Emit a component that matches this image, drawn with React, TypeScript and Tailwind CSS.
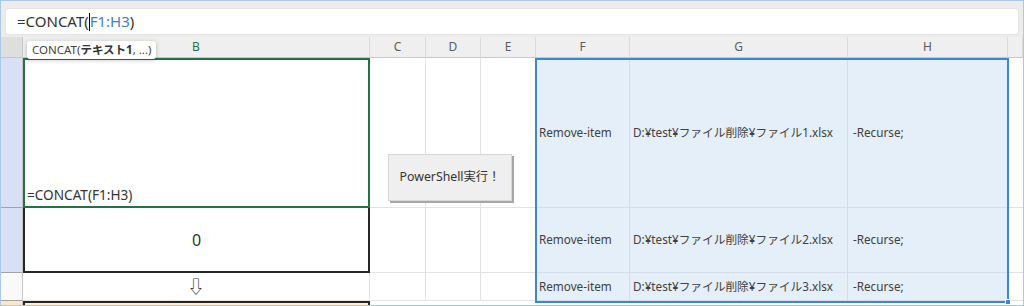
const cols = ['B', 'C', 'D', 'E', 'F', 'G', 'H', ''];

const rows = [
  { h: 'h-[150px]', f: 'Remove-item', g: 'D:¥test¥ファイル削除¥ファイル1.xlsx', r: '-Recurse;' },
  { h: 'h-[65px]', f: 'Remove-item', g: 'D:¥test¥ファイル削除¥ファイル2.xlsx', r: '-Recurse;' },
  { h: 'h-[28px]', f: 'Remove-item', g: 'D:¥test¥ファイル削除¥ファイル3.xlsx', r: '-Recurse;' },
];

function SelCell({ text, last }: { text: string; last?: boolean }) {
  return (
    <div
      className={`flex items-center bg-[#e5eff9] border-b border-[#d3dde8] text-[11.7px] text-[#404040] whitespace-nowrap overflow-hidden ${
        last ? 'pl-[5px]' : 'pl-[3px] border-r'
      }`}
    >
      {text}
    </div>
  );
}

export default function App() {
  return (
    <div className="relative w-[1024px] h-[306px] overflow-hidden border border-[#a9c8ea] bg-white font-['Noto_Sans','Noto_Sans_CJK_JP',sans-serif]">
      {/* formula bar */}
      <div className="h-[36px] bg-[#ececec] px-[5px] pt-[8px]">
        <div className="h-[25px] bg-white rounded-[3px] shadow-[0_0_2px_rgba(0,0,0,0.12)] flex items-center pl-[11px] text-[15px] text-[#333]">
          <span>=CONCAT(</span>
          <span className="inline-block w-px h-[18px] bg-black" />
          <span className="text-[#3d82c6]">F1:H3</span>
          <span>)</span>
        </div>
      </div>

      <div className="grid grid-cols-[22px_347px_56px_55px_55px_94px_218px_160px_1fr]">
        {/* header row */}
        <div className="h-[21px] bg-[#dedede] border-b border-r border-[#c6c6c6]" />
        {cols.map((c, i) => (
          <div
            key={i}
            className={`h-[21px] bg-[#efefef] border-b border-[#c8c8c8] border-r border-r-[#dadada] flex items-center justify-center text-[12px] ${
              c === 'B' ? 'text-[#217346]' : 'text-[#5c5c5c]'
            }`}
          >
            {c}
          </div>
        ))}

        {rows.map((row, i) => (
          <div key={i} className="contents">
            <div
              className={`${row.h} border-r border-[#c6c6c6] border-b border-b-[#a3a3a3] ${
                i < 2 ? 'bg-[#d7e0f4]' : 'bg-[#f9f9f9]'
              }`}
            />
            {i === 0 && (
              <div className="border-2 border-[#217346] flex items-end pl-[2px] pb-[1px] text-[13.6px] text-[#333]">
                =CONCAT(F1:H3)
              </div>
            )}
            {i === 1 && (
              <div className="border-2 border-t-0 border-[#262626] flex items-center justify-center text-[16px] text-[#333]">
                0
              </div>
            )}
            {i === 2 && (
              <div className="border-r border-b border-[#e2e2e2] flex items-center justify-center text-[17px] leading-none text-[#333]">
                ⇩
              </div>
            )}
            <div className="border-r border-b border-[#e2e2e2]" />
            <div className="border-r border-b border-[#e2e2e2]" />
            <div className="border-b border-[#e2e2e2]" />
            <SelCell text={row.f} />
            <SelCell text={row.g} />
            <SelCell text={row.r} last />
            <div className="border-b border-[#e2e2e2]" />
          </div>
        ))}

        {/* row 4 */}
        <div className="h-[10px] bg-[#fbe9c6] border-r border-[#c6c6c6]" />
        <div className="bg-[#fdf0cf] border-t-2 border-l-2 border-r-2 border-[#262626]" />
        <div className="col-span-7" />
      </div>

      {/* range selection F1:H3 */}
      <div className="absolute left-[534px] top-[57px] w-[474px] h-[245px] border-2 border-[#3b87d4] pointer-events-none">
        <div className="absolute -right-[4px] -bottom-[4px] w-[6px] h-[6px] bg-[#3b87d4] border border-white" />
      </div>

      {/* shape button */}
      <div className="absolute left-[387px] top-[153px] w-[124px] h-[47px] bg-[#efefef] border border-[#d6d6d6] shadow-[2px_2px_0_#a6a6a6] flex items-center justify-center text-[12.3px] text-[#333]">
        PowerShell実行！
      </div>

      {/* function tooltip */}
      <div className="absolute left-[26px] top-[40px] h-[18px] px-[5px] bg-white rounded-[3px] shadow-[0_1px_4px_rgba(0,0,0,0.25)] flex items-center text-[11.5px] text-[#444] whitespace-nowrap">
        CONCAT(<b className="font-bold text-[#333]">テキスト1</b>, ...)
      </div>
    </div>
  );
}
